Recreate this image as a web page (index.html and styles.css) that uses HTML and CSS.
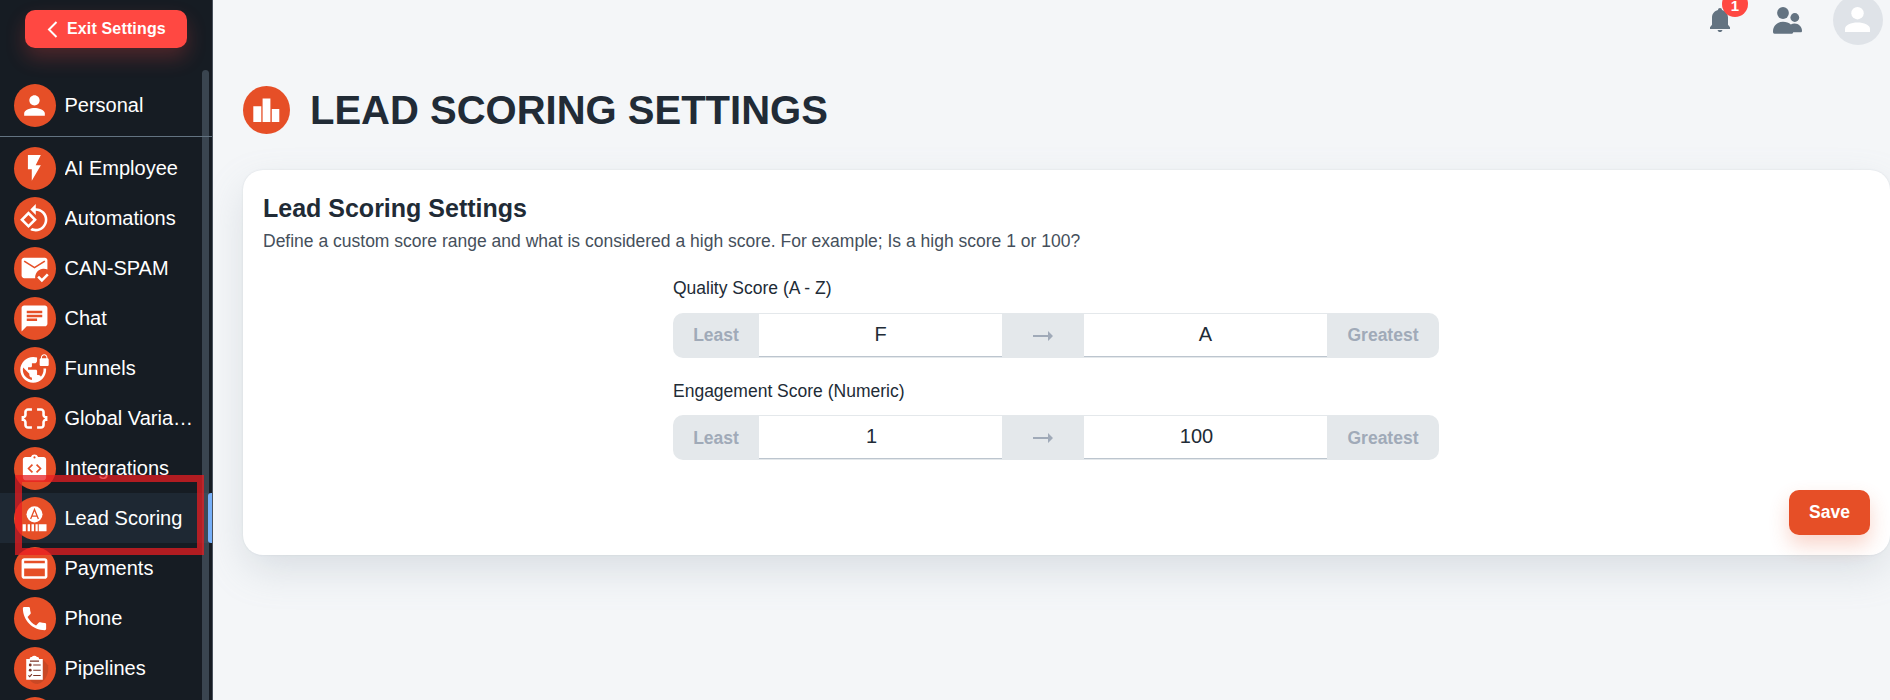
FILE: index.html
```html
<!DOCTYPE html>
<html lang="en">
<head>
  <meta charset="UTF-8">
  <title>Lead Scoring Settings</title>
  <link rel="stylesheet" href="styles.css">
</head>
<body>

<aside class="sidebar">
  <button class="exit">
    <svg width="11" height="17" viewBox="0 0 11 17"><path d="M9.5 1L2 8.500l7.500 7.500" fill="none" stroke="#fff" stroke-width="2"/></svg>
    Exit Settings
  </button>

  <nav class="menu">
    <a class="item personal">
      <span class="icon"><svg viewBox="0 0 24 24"><path d="M12 12c2.210 0 4-1.790 4-4s-1.790-4-4-4-4 1.790-4 4 1.790 4 4 4zm0 2c-2.670 0-8 1.340-8 4v2h16v-2c0-2.660-5.330-4-8-4z"/></svg></span>
      <span class="name">Personal</span>
    </a>
    <a class="item">
      <span class="icon"><svg viewBox="0 0 24 24"><path d="M7 2v11h3v9l7-12h-4l4-8z" transform="translate(-.1 -.5)"/></svg></span>
      <span class="name">AI Employee</span>
    </a>
    <a class="item">
      <span class="icon"><svg viewBox="0 0 24 24"><path d="M7.340 6.410L.86 12.900l6.490 6.480 6.490-6.480-6.500-6.490zM3.690 12.900l3.660-3.660L11 12.900l-3.660 3.660-3.650-3.660zm15.670-6.260C17.610 4.880 15.300 4 13 4V.76L8.760 5 13 9.240V6c1.790 0 3.580.68 4.950 2.050 2.730 2.730 2.730 7.170 0 9.900C16.580 19.320 14.790 20 13 20c-.97 0-1.940-.21-2.840-.61l-1.490 1.490C10.020 21.620 11.510 22 13 22c2.300 0 4.610-.88 6.360-2.640 3.520-3.510 3.520-9.210 0-12.720z"/></svg></span>
      <span class="name">Automations</span>
    </a>
    <a class="item">
      <span class="icon"><svg viewBox="0 0 24 24"><path d="M4 3.600h16c1.100 0 2 .9 2 2v7.100a6.800 6.800 0 0 0-9.500 6.800H4c-1.100 0-2-.9-2-2V5.600c0-1.100.9-2 2-2z"/><path class="cut" d="M4 6.300l8 5 8-5"/><path class="tick" d="M14.800 18.300l2.900 2.900 4.600-4.600"/></svg></span>
      <span class="name">CAN-SPAM</span>
    </a>
    <a class="item">
      <span class="icon"><svg viewBox="0 0 24 24"><path d="M20 2H4c-1.100 0-1.990.9-1.990 2L2 22l4-4h14c1.100 0 2-.9 2-2V4c0-1.100-.9-2-2-2zM6 9h12v2H6V9zm8 5H6v-2h8v2zm4-6H6V6h12v2z"/></svg></span>
      <span class="name">Chat</span>
    </a>
    <a class="item">
      <span class="icon"><svg viewBox="0 0 24 24"><path d="M22 4v-.5C22 2.120 20.880 1 19.500 1S17 2.120 17 3.500V4c-.55 0-1 .45-1 1v4c0 .55.45 1 1 1h5c.55 0 1-.45 1-1V5c0-.55-.45-1-1-1zm-.8 0h-3.400v-.5c0-.94.76-1.700 1.700-1.700s1.700.76 1.700 1.700V4zm-2.280 8c.04.33.08.66.08 1 0 2.080-.8 3.970-2.100 5.390-.26-.81-1-1.390-1.900-1.390h-1v-3c0-.55-.45-1-1-1H7v-2h2c.55 0 1-.45 1-1V8h2c1.100 0 2-.9 2-2V3.460c-.95-.3-1.950-.46-3-.46C5.480 3 1 7.480 1 13s4.480 10 10 10 10-4.480 10-10c0-.34-.02-.67-.05-1h-2.030zM10 20.930c-3.950-.49-7-3.850-7-7.930 0-.62.08-1.210.21-1.790L8 16v1c0 1.100.9 2 2 2v1.930z"/></svg></span>
      <span class="name">Funnels</span>
    </a>
    <a class="item">
      <span class="icon"><svg viewBox="0 0 24 24"><path d="M4 7v2c0 .55-.45 1-1 1H2v4h1c.55 0 1 .45 1 1v2c0 1.650 1.350 3 3 3h3v-2H7c-.55 0-1-.45-1-1v-2c0-1.300-.84-2.420-2-2.830v-.34C5.160 11.420 6 10.300 6 9V7c0-.55.45-1 1-1h3V4H7C5.350 4 4 5.350 4 7zm17 3c-.55 0-1-.45-1-1V7c0-1.650-1.350-3-3-3h-3v2h3c.55 0 1 .45 1 1v2c0 1.300.84 2.420 2 2.830v.34c-1.160.41-2 1.520-2 2.830v2c0 .55-.45 1-1 1h-3v2h3c1.650 0 3-1.350 3-3v-2c0-.55.45-1 1-1h1v-4h-1z"/></svg></span>
      <span class="name">Global Variables</span>
    </a>
    <a class="item">
      <span class="icon"><svg viewBox="0 0 24 24"><path d="M5 3h4.200a3 3 0 0 1 5.600 0H19c1.100 0 2 .9 2 2v14c0 1.100-.9 2-2 2H5c-1.100 0-2-.9-2-2V5c0-1.100.9-2 2-2z"/><circle cx="12" cy="3.400" r=".8" fill="#e64f27"/><path class="cut" d="M10.400 9L7.400 12l3 3M13.600 9l3 3-3 3"/></svg></span>
      <span class="name">Integrations</span>
    </a>
    <a class="item active">
      <span class="icon"><svg viewBox="0 0 24 24"><circle cx="12" cy="8.800" r="6.200"/><path class="letter" d="M9 12.300l3-7.300 3 7.300M10 10.100h4"/><path d="M2.800 16.500h2.500v5.300H2.800zM6.700 16.500h1.800v5.300H6.700zM9.700 16.500h1.900v5.300H9.700zM12.800 16.500h1.700v5.300h-1.700zM15.300 16.500h6v5.300h-6z"/></svg></span>
      <span class="name">Lead Scoring</span>
    </a>
    <a class="item">
      <span class="icon"><svg viewBox="0 0 24 24"><path d="M20 4H4c-1.110 0-1.990.89-1.990 2L2 18c0 1.110.89 2 2 2h16c1.110 0 2-.89 2-2V6c0-1.110-.89-2-2-2zm0 14H4v-6h16v6zm0-10H4V6h16v2z"/></svg></span>
      <span class="name">Payments</span>
    </a>
    <a class="item">
      <span class="icon"><svg viewBox="0 0 24 24"><path d="M6.620 10.790c1.440 2.830 3.760 5.140 6.590 6.590l2.200-2.200c.27-.27.67-.36 1.020-.24 1.120.37 2.330.57 3.570.57.55 0 1 .45 1 1V20c0 .55-.45 1-1 1-9.390 0-17-7.610-17-17 0-.55.45-1 1-1h3.500c.55 0 1 .45 1 1 0 1.250.2 2.450.57 3.570.11.35.03.74-.25 1.020l-2.200 2.200z"/></svg></span>
      <span class="name">Phone</span>
    </a>
    <a class="item">
      <span class="icon"><svg viewBox="0 0 24 24"><path d="M18.500 5l4 4.500c1 6-2 13-8 14.500-3 0-5-1-6.500-4z" fill="#c84825"/><path d="M5.600 4.600h2.600a1.500 1.500 0 0 1 1.700-1.500 2.300 2 0 0 1 4 0 1.500 1.500 0 0 1 1.700 1.500H18.400v16.100H5.600z"/><path class="lines" d="M8.500 6.300h7M11 9.300h5.800M11 13.300h5.800M7.300 17.300l1 1 1.700-2M11 17.400h5.800"/><circle cx="8.700" cy="9.300" r="1.100" fill="#7c3324"/><circle cx="8.700" cy="13.300" r="1.100" fill="#7c3324"/></svg></span>
      <span class="name">Pipelines</span>
    </a>
    <a class="item">
      <span class="icon"></span>
    </a>
  </nav>
  <div class="scrollbar"></div>
  <div class="marker"></div>
</aside>

<main class="main">
  <header class="topbar">
    <div class="bell">
      <svg width="20" height="24" viewBox="0 0 20 24" fill="#637381"><path d="M10 0c1.200 0 2 .8 2 1.900C15.500 2.800 18 5.500 18 9.500v7.300l2 2.400V21H0v-1.800l2-2.400V9.500c0-4 2.500-6.700 6-7.600C8 .8 8.800 0 10 0zM7.500 22h5c-.4 1.400-1.400 2.200-2.500 2.200S7.900 23.400 7.500 22z"/></svg>
      <span class="badge">1</span>
    </div>
    <svg width="29" height="27" viewBox="0 0 29 27" fill="#637381"><circle cx="10" cy="6" r="5.900"/><circle cx="21.800" cy="10.500" r="4.400"/><path d="M0 24.500C0 18.500 4.500 14.800 10 14.800c3.200 0 6 1.200 7.800 2.600A8.500 8.500 0 0 1 21.500 16.500c4.300 0 7.500 3.500 7.500 7.200 0 1-.5 1.500-1.500 1.500h-7.300c-.1.900-.6 1.500-1.700 1.500H1.500C.5 26.700 0 26 0 24.500z"/></svg>
    <div class="avatar">
      <svg width="25" height="25" viewBox="0 0 25 25" fill="#fff"><circle cx="12.500" cy="6.200" r="6.200"/><path d="M0 25v-3c0-4 6-6.500 12.500-6.500S25 18 25 22v3z"/></svg>
    </div>
  </header>

  <h1 class="title">
    <span class="title-icon"><svg width="27" height="24" viewBox="0 0 27 24" fill="#fff"><path d="M.3 8.300h8V24h-8zM9.600.4h7.800V24H9.600zM18.800 11h7.500v13h-7.500z"/></svg></span>
    LEAD SCORING SETTINGS
  </h1>

  <section class="card">
    <h2>Lead Scoring Settings</h2>
    <p class="desc">Define a custom score range and what is considered a high score. For example; Is a high score 1 or 100?</p>

    <div class="scores">
      <label>Quality Score (A - Z)</label>
      <div class="group">
        <span class="addon least">Least</span>
        <span class="field">F</span>
        <span class="addon arrow"><svg width="20" height="10" viewBox="0 0 20 10"><path d="M0 4h15V0l5 5-5 5V6H0z" fill="#a0aab8"/></svg></span>
        <span class="field">A</span>
        <span class="addon greatest">Greatest</span>
      </div>
      <label>Engagement Score (Numeric)</label>
      <div class="group numeric">
        <span class="addon least">Least</span>
        <span class="field">1</span>
        <span class="addon arrow"><svg width="20" height="10" viewBox="0 0 20 10"><path d="M0 4h15V0l5 5-5 5V6H0z" fill="#a0aab8"/></svg></span>
        <span class="field">100</span>
        <span class="addon greatest">Greatest</span>
      </div>
    </div>

    <button class="save">Save</button>
  </section>
</main>

</body>
</html>
```

FILE: styles.css
```css
* {
  box-sizing: border-box;
}
body {
  margin: 0;
  height: 700px;
  overflow: hidden;
  display: flex;
  font-family: "Liberation Sans", Arial, sans-serif;
  font-size: 17.5px;
  color: #212b36;
  background: #f4f6f8;
}
button {
  border: none;
  font-family: inherit;
  font-weight: bold;
  color: #fff;
}

/* sidebar */
.sidebar {
  position: relative;
  flex: none;
  width: 213px;
  height: 700px;
  padding-top: 10px;
  overflow: hidden;
  background: #161c23;
  border-right: 1px solid #4a535e;
}
.exit {
  display: flex;
  align-items: center;
  gap: 9px;
  width: 162px;
  height: 38px;
  margin: 0 0 32px 25px;
  padding: 0 0 0 22px;
  font-size: 16px;
  letter-spacing: 0.15px;
  border-radius: 10px;
  background: #ff4842;
  box-shadow: 0 10px 20px rgba(255, 72, 66, 0.24);
}
.item {
  display: flex;
  align-items: center;
  gap: 9px;
  height: 50px;
  padding-left: 14px;
  font-size: 20px;
  color: #fff;
}
.item.personal {
  height: 57px;
  padding-bottom: 6px;
  margin-bottom: 6px;
  border-bottom: 1px solid #637381;
}
.item.active {
  background: #1e2833;
}
.icon {
  display: flex;
  align-items: center;
  justify-content: center;
  flex: none;
  width: 42px;
  height: 43px;
  border-radius: 50%;
  background: #e64f27;
}
.icon svg {
  width: 31px;
  height: 31px;
  margin-right: 1px;
  fill: #fff;
}
.icon .cut {
  fill: none;
  stroke: #e64f27;
  stroke-width: 1.3;
}
.icon .tick {
  fill: none;
  stroke: #fff;
  stroke-width: 2;
}
.icon .letter {
  fill: none;
  stroke: #e64f27;
  stroke-width: 1;
}
.icon .lines {
  fill: none;
  stroke: #7c3324;
  stroke-width: 0.8;
}
.name {
  width: 129px;
  line-height: 26px;
  margin-left: -0.5px;
  white-space: nowrap;
  overflow: hidden;
  text-overflow: ellipsis;
}
.scrollbar {
  position: absolute;
  left: 202px;
  top: 70px;
  width: 7px;
  height: 640px;
  border-radius: 4px;
  background: rgba(99, 115, 129, 0.48);
}
/* outline drawn over the current entry */
.marker {
  position: absolute;
  left: 15px;
  top: 475px;
  width: 189px;
  height: 80px;
  border: 7px solid rgba(232, 28, 32, 0.74);
}
.item.active::after {
  content: "";
  position: relative;
  z-index: 1;
  width: 4px;
  height: 50px;
  margin-left: auto;
  border-radius: 3px 0 0 3px;
  background: #76b0f9;
}

/* content */
.main {
  flex: 1;
  min-width: 0;
  padding-left: 30px;
}
.topbar {
  display: flex;
  align-items: center;
  justify-content: flex-end;
  height: 40px;
  padding-right: 7px;
}
.topbar > svg {
  margin: 0 31px 0 43px;
}
.bell {
  position: relative;
  height: 24px;
}
.bell svg {
  display: block;
}
.badge {
  position: absolute;
  left: 12px;
  top: -17px;
  width: 26px;
  height: 26px;
  border-radius: 50%;
  background: #ff4842;
  color: #fff;
  font-size: 15px;
  font-weight: bold;
  line-height: 29px;
  text-align: center;
}
.avatar {
  display: flex;
  align-items: center;
  justify-content: center;
  flex: none;
  width: 50px;
  height: 50px;
  border-radius: 50%;
  background: #dfe3e8;
}
.avatar svg {
  margin: 0 2px 1px 0;
}
.title {
  display: flex;
  align-items: center;
  gap: 20px;
  height: 48px;
  margin: 46px 0 36px;
  font-size: 40px;
}
.title-icon {
  display: flex;
  align-items: center;
  justify-content: center;
  width: 47px;
  height: 48px;
  border-radius: 50%;
  background: #e64f27;
}
.card {
  display: flex;
  flex-direction: column;
  height: 385px;
  padding: 23px 20px 20px;
  border-radius: 20px;
  background: #fff;
  box-shadow: 0 0 2px rgba(145, 158, 171, 0.24), 0 16px 40px -4px rgba(145, 158, 171, 0.3);
}
.card h2 {
  margin: 0;
  font-size: 25px;
  line-height: 30px;
}
.desc {
  margin: 4px 0 23px;
  line-height: 28px;
  color: #454f5b;
}
.scores {
  width: 766px;
  margin-left: 410px;
}
.scores label {
  display: block;
  line-height: 20px;
}
.group {
  display: flex;
  height: 45px;
  margin: 15px 0 23px;
  border-radius: 10px;
  overflow: hidden;
  background: #e4e8eb;
}
.group.numeric {
  margin-top: 14px;
}
.addon {
  display: flex;
  align-items: center;
  justify-content: center;
  font-weight: bold;
  color: #a0aab8;
}
.numeric .addon {
  padding-top: 1px;
}
.least {
  width: 86px;
}
.arrow {
  width: 82px;
}
.greatest {
  width: 112px;
}
.field {
  width: 243px;
  height: 43px;
  margin-top: 1px;
  border-bottom: 1px solid #bcc5ce;
  background: #fff;
  font-size: 20px;
  line-height: 40px;
  text-align: center;
}
.numeric .field {
  padding-right: 18px;
}
.save {
  align-self: flex-end;
  width: 81px;
  height: 45px;
  margin-top: auto;
  font-size: 17.5px;
  border-radius: 10px;
  background: #e64f27;
  box-shadow: 0 10px 20px rgba(230, 79, 39, 0.24);
}
```
